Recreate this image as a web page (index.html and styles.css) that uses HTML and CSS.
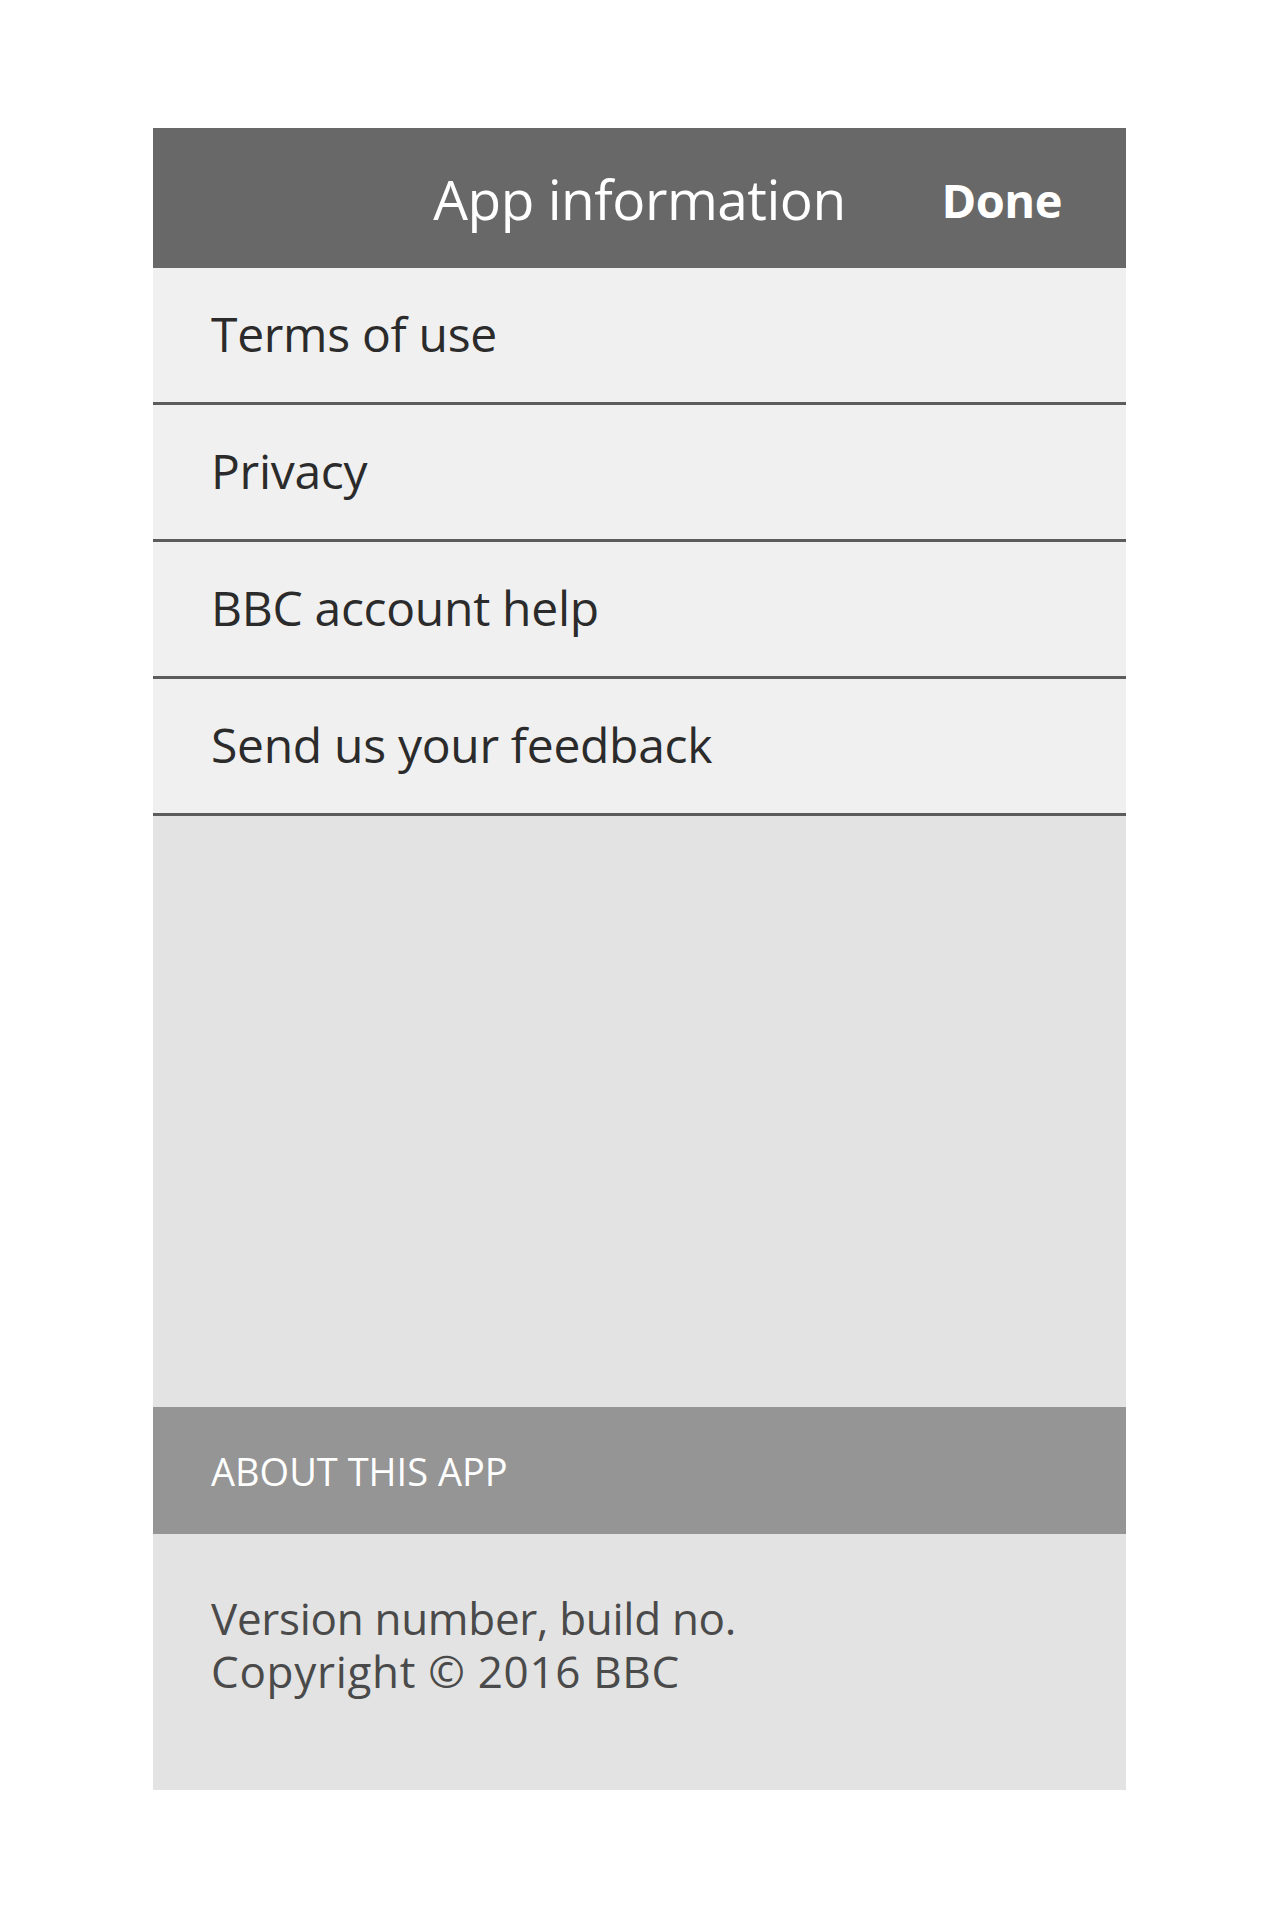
FILE: index.html
```html
<!DOCTYPE html>
<html lang="en">
<head>
    <meta charset="UTF-8">
    <meta name="viewport" content="width=device-width, initial-scale=1.0">
    <title>App information</title>
    <link rel="stylesheet" href="styles.css">
</head>
<body>
    <div class="panel">
        <div class="topbar">
            <span></span>
            <h1 class="topbar-title">App information</h1>
            <a class="topbar-done" href="#">Done</a>
        </div>

        <ul class="menu">
            <li class="menu-item"><a href="#">Terms of use</a></li>
            <li class="menu-item"><a href="#">Privacy</a></li>
            <li class="menu-item"><a href="#">BBC account help</a></li>
            <li class="menu-item"><a href="#">Send us your feedback</a></li>
        </ul>

        <div class="spacer"></div>

        <div class="section-head">ABOUT THIS APP</div>
        <div class="about">
            <p class="about-line">Version number, build no.</p>
            <p class="about-line about-copy">Copyright &copy; 2016 BBC</p>
        </div>
    </div>
</body>
</html>
```

FILE: styles.css
```css
body {
    margin: 0;
    background: #ffffff;
    font-family: "Open Sans", "Noto Sans", sans-serif;
}
.panel {
    width: 973px;
    margin: 128px 0 0 153px;
    display: flex;
    flex-direction: column;
}
.topbar {
    height: 140px;
    background-color: #686868;
    display: grid;
    grid-template-columns: 1fr auto 1fr;
    align-items: center;
    padding: 0 64px;
    box-sizing: border-box;
    color: #ffffff;
}
.topbar-title {
    margin: 0;
    font-size: 55px;
    font-weight: normal;
    letter-spacing: -0.5px;
}
.topbar-done {
    justify-self: end;
    color: #ffffff;
    text-decoration: none;
    font-weight: bold;
    font-size: 47px;
    letter-spacing: -0.5px;
    padding-top: 4px;
}
.menu {
    list-style: none;
    margin: 0;
    padding: 0;
}
.menu-item {
    height: 134px;
    background-color: #f0f0f0;
    border-bottom: 3px solid #5c5c5c;
    display: flex;
    align-items: center;
}
.menu-item a {
    padding-left: 58px;
    padding-bottom: 3px;
    color: #2b2b2b;
    text-decoration: none;
    font-size: 48px;
    letter-spacing: -0.3px;
}
.spacer {
    height: 591px;
    background-color: #e3e3e3;
}
.section-head {
    height: 127px;
    background-color: #959595;
    color: #ffffff;
    font-size: 38px;
    display: flex;
    align-items: center;
    padding-left: 58px;
}
.about {
    height: 256px;
    background-color: #e3e3e3;
    padding: 58px 0 0 58px;
    box-sizing: border-box;
}
.about-line {
    margin: 0;
    height: 53px;
    color: #4a4a4a;
    font-size: 44px;
    line-height: 53px;
    letter-spacing: -0.3px;
}
.about-copy {
    letter-spacing: 0.7px;
}
```
